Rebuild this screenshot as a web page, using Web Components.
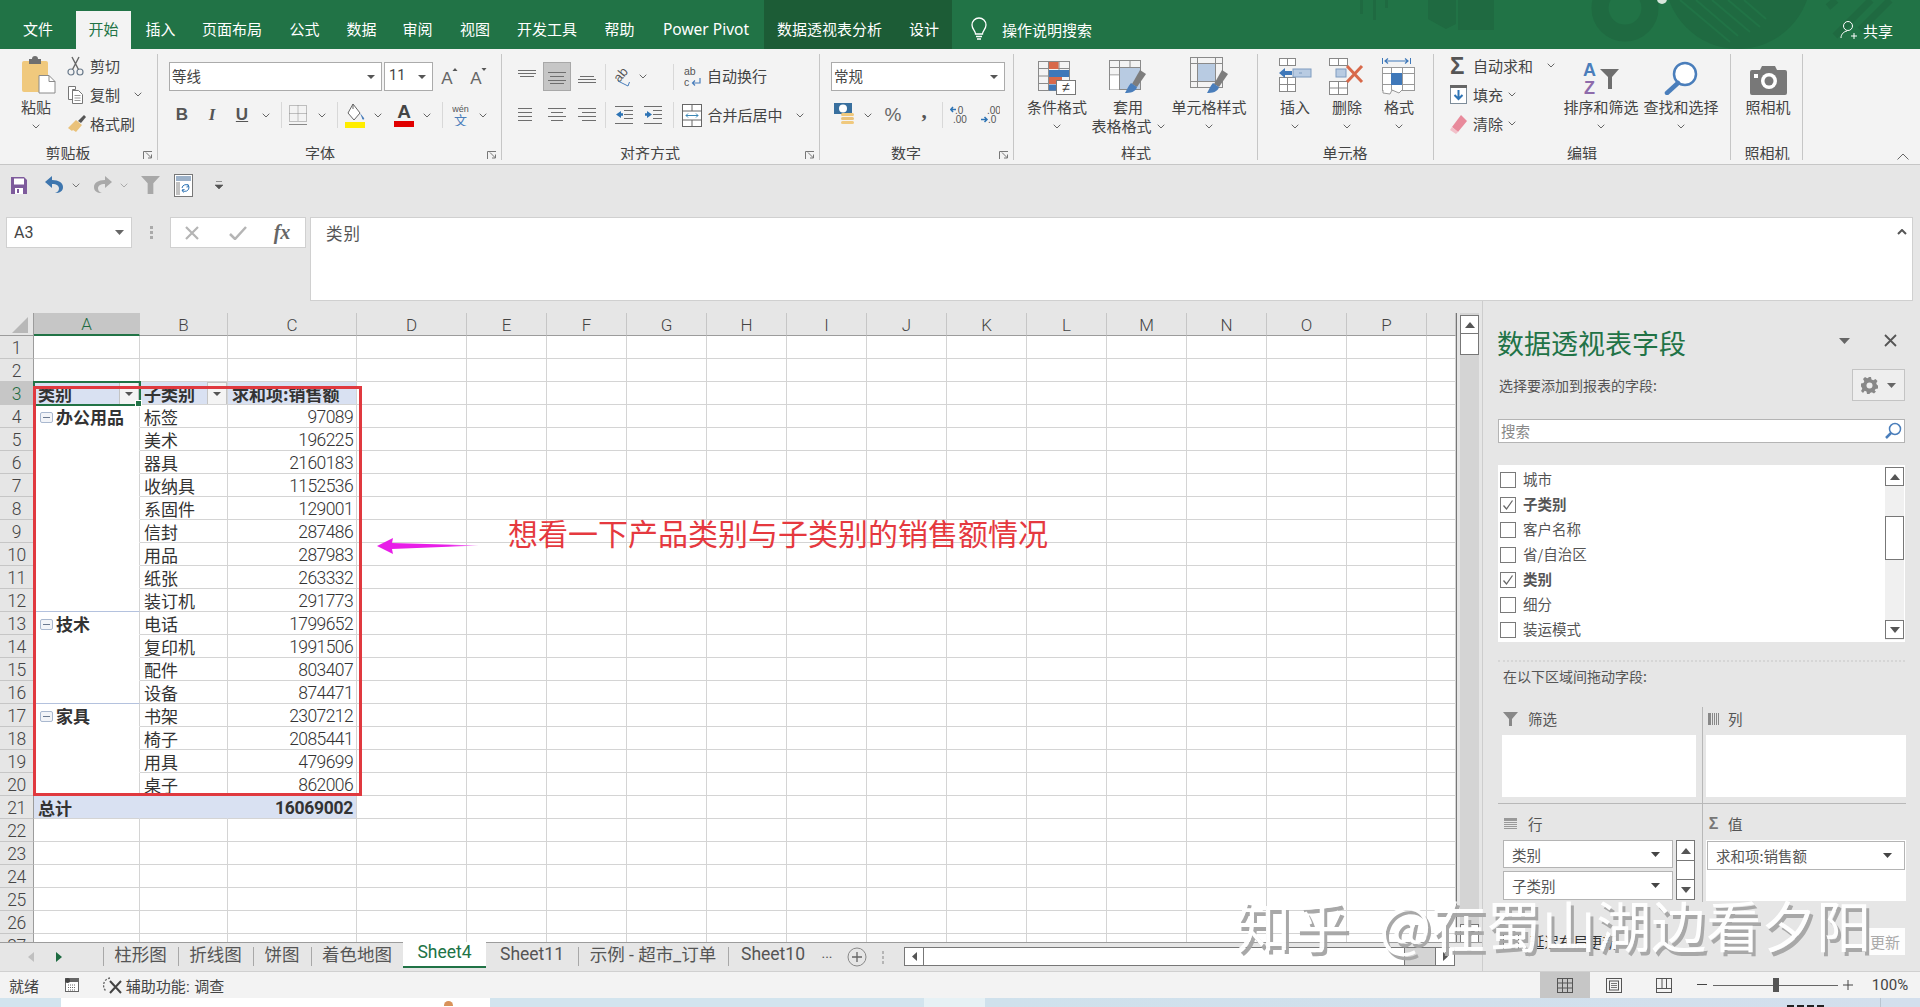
<!DOCTYPE html>
<html lang="zh"><head><meta charset="utf-8"><title>Excel</title>
<style>
html,body{margin:0;padding:0;width:1920px;height:1007px;overflow:hidden;background:#e6e6e6;font-family:"Noto Sans CJK SC",sans-serif}
</style></head>
<body>
<x-app>
  <x-tabbar></x-tabbar>
  <x-ribbon></x-ribbon>
  <x-qat></x-qat>
  <x-formula></x-formula>
  <x-main>
    <x-sheetarea></x-sheetarea>
    <x-pane></x-pane>
  </x-main>
  <x-status></x-status>
  <x-desktop></x-desktop>
  <x-annot></x-annot>
</x-app>
<script>
const CJK='"Noto Sans CJK SC"';
const FONT=`"Liberation Sans",${CJK},sans-serif`;
function def(name,css,html,init){
  customElements.define(name,class extends HTMLElement{
    connectedCallback(){
      if(this.shadowRoot)return;
      const r=this.attachShadow({mode:'open'});
      const h=typeof html==='function'?html(this):html;
      r.innerHTML=`<style>${css}</style>${h}`;
      if(init)init(r,this);
    }
  });
}
const chev=(c='#666')=>`<svg width="8" height="5" viewBox="0 0 8 5"><path d="M.7.7 4 4 7.3.7" fill="none" stroke="${c}"/></svg>`;
const tri=(c='#555',w=8,h=4)=>`<svg width="${w}" height="${h}" viewBox="0 0 8 4" preserveAspectRatio="none"><path d="M0 0h8L4 4z" fill="${c}"/></svg>`;
function place(x0,items){let cur=x0,s='';for(const [c,w,h,extra] of items){const ml=c-w/2-cur;s+=`<span class="c" style="width:${w}px;margin-left:${ml}px;${extra||''}">${h}</span>`;cur=c+w/2;}return s;}
const sep=`<i class="sp"></i>`;
const tx=t=>`<span class="tx">${t}</span>`;
function alignIcon(ys,xs){let s='<svg width="18" height="18" viewBox="0 0 18 18">';ys.forEach((y,i)=>{const [a,b]=xs[i];s+=`<rect x="${a}" y="${y}" width="${b-a}" height="1" fill="#6e6e6e"/>`});return s+'</svg>';}

/* ---------- app shell ---------- */
def('x-app',`:host{display:flex;flex-direction:column;width:1920px;height:1007px;position:relative;overflow:hidden}`,`<slot></slot>`);
def('x-main',`:host{display:flex;height:670px}`,`<slot></slot>`);

/* ---------- tab bar ---------- */
const tabs=[['文件',76,0],['开始',55,1],['插入',59,0],['页面布局',84,0],['公式',61,0],['数据',53,0],['审阅',59,0],['视图',56,0],['开发工具',88,0],['帮助',57,0],['Power Pivot',116,0]];
def('x-tabbar',`
:host{display:flex;height:49px;background:#217346;color:#fff;font:15px ${FONT};position:relative;overflow:hidden}
.t{display:flex;align-items:center;justify-content:center;height:38px;margin-top:11px;white-space:nowrap;padding-bottom:3px;box-sizing:border-box;position:relative;z-index:1;flex:none}
.on{background:#f3f3f3;color:#217346}
.pp{font-family:"Noto Sans",sans-serif;font-size:15.5px}
.ctx{display:flex;background:#1c5c36;width:188px;height:49px;position:relative;z-index:1;flex:none}
.ctx span{position:absolute;top:11px;height:35px;display:flex;align-items:center}
.tell{display:flex;align-items:center;margin:11px 0 0 18px;height:36px;position:relative;z-index:1}
.tell span{margin-left:14px}
.share{position:absolute;left:1840px;top:18px;display:flex;align-items:center;gap:5px;height:24px;z-index:1}
svg.deco{position:absolute;left:0;top:0}
`,()=>{
 let s=`<svg class="deco" width="1920" height="49" viewBox="0 0 1920 49">
  <g fill="#1f6a41">
   <rect x="1360" y="0" width="3" height="14"/><rect x="1373" y="0" width="3" height="20"/><rect x="1385" y="0" width="3" height="8"/>
   <path d="M1428 0h28v24l-10 5-18-10z"/><rect x="1458" y="0" width="36" height="30"/>
   <circle cx="1625" cy="8" r="25" fill="none" stroke="#1f6a41" stroke-width="17"/>
   <circle cx="1738" cy="-24" r="73"/>
  </g>
  <circle cx="1662" cy="-1" r="5" fill="#d8e6dc"/>
  <g stroke="#217346" stroke-width="2" fill="none"><path d="M1680 0l50 42M1696 0l42 36M1712 0l38 32M1728 0l32 27M1744 0l22 19"/></g>
  <g stroke="#1f6a41" stroke-width="7" fill="none"><path d="M1828 7l8-7M1835 36l36-36M1860 30l30-30"/></g>
 </svg>`;
 for(const [n,w,on] of tabs){s+=`<div class="t ${on?'on':''} ${n[0]=='P'?'pp':''}" style="width:${w}px">${n}</div>`;}
 s+=`<div class="ctx"><span style="left:13px">数据透视表分析</span><span style="left:145px">设计</span></div>`;
 s+=`<div class="tell"><svg width="18" height="24" viewBox="0 0 18 24"><path d="M5.5 17c0-3-3.500-5-3.500-9a7 7 0 0 1 14 0c0 4-3.500 6-3.500 9z" fill="none" stroke="#fff" stroke-width="1.300"/><path d="M6 19.500h6M7 22h4" stroke="#fff" stroke-width="1.300"/></svg><span>操作说明搜索</span></div>`;
 s+=`<div class="share"><svg width="18" height="20" viewBox="0 0 18 20"><circle cx="8" cy="6" r="4.500" fill="none" stroke="#fff"/><path d="M1 18c0-4 3-6.500 6-7M11 16h6M14 13v6" fill="none" stroke="#fff"/></svg><span>共享</span></div>`;
 return s;
});

/* ---------- ribbon ---------- */
def('x-group',`
:host{display:flex;flex-direction:column;height:106px;margin-top:5px;border-right:1px solid #c6c6c6;position:relative;box-sizing:border-box}
.body{flex:1;min-height:0}
.lbl{height:17px;line-height:22px;overflow:hidden;text-align:center;font-size:15px;color:#444;white-space:nowrap}
.lc{position:absolute;right:4px;bottom:1px;width:10px;height:8px}
`,h=>`<div class="body"><slot></slot></div><div class="lbl" style="width:${h.getAttribute('lw')}px">${h.getAttribute('label')}</div>${h.hasAttribute('launch')?`<svg class="lc" viewBox="0 0 10 8"><path d="M.5 8V.5H9M3 1.500 8.500 7M8.500 3.500V7H5" fill="none" stroke="#777"/></svg>`:''}`);

const paste=`<svg width="36" height="38" viewBox="0 0 36 38"><rect x="1" y="5" width="26" height="31" rx="2" fill="#f0c97d"/><path d="M8 3h3a3 3 0 0 1 6 0h3v5H8z" fill="#6f6f6f"/><path d="M18 19.500h10l6 6V37H18z" fill="#fff" stroke="#8a8a8a"/><path d="M28 19.500v6h6" fill="none" stroke="#8a8a8a"/></svg>`;
const sciss=`<svg width="17" height="20" viewBox="0 0 17 20"><g fill="none" stroke="#6b7b8c" stroke-width="1.200"><circle cx="4" cy="16" r="3"/><circle cx="13" cy="16" r="3"/></g><path d="M5.500 13.500 12 1M11.500 13.500 5 1" stroke="#666" stroke-width="1.400" fill="none"/></svg>`;
const copy=`<svg width="17" height="19" viewBox="0 0 17 19"><path d="M1.500 1.500h7v3h-3v10h-4z" fill="#fff" stroke="#777"/><path d="M5.500 5.500h6l4 4v9h-10z" fill="#fff" stroke="#777"/><path d="M7.500 10.500h6M7.500 13h6M7.500 15.500h6" stroke="#999"/></svg>`;
const brush=`<svg width="20" height="19" viewBox="0 0 20 19"><path d="M1 14 9 6l6 5-6 7-3-2-1 1z" fill="#eac27a"/><path d="M11 7l6-6 2 2-5 6z" fill="#555"/></svg>`;
const bordersI=`<svg width="18" height="20" viewBox="0 0 18 20"><rect x=".5" y=".5" width="17" height="16" fill="none" stroke="#888" stroke-dasharray="1 1"/><path d="M9 .5v16M.5 8.500h17" stroke="#888" stroke-dasharray="1 1"/><path d="M0 19.500h18" stroke="#888"/></svg>`;
const fillI=`<svg width="20" height="25" viewBox="0 0 20 25"><path d="M8 1l7 9-6 7-6-7z" fill="#fff" stroke="#666"/><path d="M15 10l2 5c0 2 3 2 2 0" fill="#4a7ebb"/><path d="M8 1v5" stroke="#666"/><rect y="19" width="20" height="6" fill="#ffed00"/></svg>`;
const fontCol=`<span style="display:inline-flex;flex-direction:column;align-items:center;font:bold 19px/15px 'Liberation Sans';color:#444">A<i style="display:block;width:20px;height:6px;background:#e00000;margin-top:2px"></i></span>`;
const wen=`<svg width="17" height="22" viewBox="0 0 17 22"><text x="8.500" y="8" text-anchor="middle" font-size="9" font-family="Liberation Sans" fill="#555">wén</text><text x="8.500" y="21" text-anchor="middle" font-size="13" font-family="Noto Sans CJK SC" fill="#4a7ebb">文</text></svg>`;
const grow=(d)=>`<svg width="18" height="18" viewBox="0 0 18 18"><text x="7" y="16" text-anchor="middle" font-size="17" font-family="Liberation Sans" fill="#666">A</text><path d="${d}" fill="#555"/></svg>`;
const orient=`<svg width="20" height="22" viewBox="0 0 20 22"><text transform="rotate(-50 9 11)" x="2" y="12" font-size="13" font-family="Liberation Sans" fill="#555">ab</text><path d="M4 15l10 5M14 20l1.500-4" stroke="#4a7ebb" fill="none"/></svg>`;
const wrapI=`<svg width="18" height="22" viewBox="0 0 18 22"><text x="0" y="9" font-size="10.500" font-family="Liberation Sans" fill="#555">ab</text><text x="0" y="20" font-size="10.500" font-family="Liberation Sans" fill="#555">c</text><path d="M16 12v5H9m2-2.500L8.500 17l2.500 2.500" fill="none" stroke="#4a7ebb" stroke-width="1.200"/></svg>`;
const indD=`<svg width="18" height="20" viewBox="0 0 18 20"><path d="M0 1.500h18M9 5.500h9M9 9.500h9M9 13.500h9M0 18.500h18" stroke="#6e6e6e"/><path d="M1 9.500 6 6v2.200h2v2.600H6V13z" fill="#2e74b5"/></svg>`;
const indI=`<svg width="18" height="20" viewBox="0 0 18 20"><path d="M0 1.500h18M9 5.500h9M9 9.500h9M9 13.500h9M0 18.500h18" stroke="#6e6e6e"/><path d="M8 9.500 3 6v2.200H1v2.600h2V13z" fill="#2e74b5"/></svg>`;
const merge=`<svg width="20" height="23" viewBox="0 0 20 23"><rect x=".5" y=".5" width="19" height="22" fill="#fff" stroke="#666"/><path d="M.5 7h19M.5 16h19M10 .5V7M10 16v6.500" stroke="#666"/><path d="M4 11.500h12M6 9.500l-2 2 2 2M14 9.500l2 2-2 2" stroke="#3b87b5" fill="none"/></svg>`;
const currency=`<svg width="20" height="24" viewBox="0 0 20 24"><rect width="18" height="11" fill="#386f9e"/><ellipse cx="9" cy="5.500" rx="4" ry="4" fill="#fff"/><rect x="7" y="10" width="13" height="3" rx="1.500" fill="#f0c97d"/><rect x="7" y="14" width="13" height="3" rx="1.500" fill="#eac27a"/><rect x="7" y="18" width="13" height="3" rx="1.500" fill="#f0c97d"/></svg>`;
const decI=(a,b,left)=>`<svg width="20" height="20" viewBox="0 0 20 20"><text x="${a}" y="8.500" font-size="10" font-family="Liberation Sans" fill="#555">${left?'.0':'.00'}</text><text x="${left?3:8}" y="18" font-size="10" font-family="Liberation Sans" fill="#555">${left?'.00':'.0'}</text>${left?'<path d="M1 4.500h5M3 2 .8 4.500 3 7" stroke="#2e74b5" stroke-width="1.500" fill="none"/>':'<path d="M1 14.500h6M4.500 12 7 14.500 4.500 17" stroke="#2e74b5" stroke-width="1.500" fill="none"/>'}</svg>`;
const cfI=`<svg width="38" height="34" viewBox="0 0 38 34"><g fill="none" stroke="#8a8a8a"><rect x=".5" y=".5" width="31" height="29"/><path d="M10.500.5v29M21 .5v29M.5 7.500h31M.5 15h31M.5 22.500h31"/></g><rect x="11" y="1" width="9.500" height="7" fill="#d8694a"/><rect x="11" y="9" width="20" height="7" fill="#3f78b9"/><rect x="11" y="16" width="13" height="7" fill="#d8694a"/><rect x="11" y="23.500" width="7" height="6" fill="#3f78b9"/><rect x="18.500" y="19.500" width="19" height="14" fill="#fff" stroke="#777"/><text x="28" y="31" text-anchor="middle" font-size="14" font-family="Liberation Sans" fill="#444">≠</text></svg>`;
const brushP=(x,y)=>`<g transform="translate(${x} ${y})"><path d="M14 0l6 4-9 13-5-3z" fill="#7d7d7d"/><path d="M5 13l6 4c-1 5-7 6-12 6 2-3 3-7 6-10z" fill="#4a7ebb"/></g>`;
const tfI=`<svg width="38" height="35" viewBox="0 0 38 35"><g fill="none" stroke="#8a8a8a"><rect x=".5" y=".5" width="31" height="29"/><path d="M10.500.5v29M21 .5v29M.5 7.500h31M.5 15h31M.5 22.500h31"/></g><rect x="11" y="8" width="20" height="21" fill="#b8cbe2"/><rect x="1" y="15.500" width="9" height="14" fill="#fff"/>${brushP(17,10)}</svg>`;
const csI=`<svg width="39" height="38" viewBox="0 0 39 38"><g fill="none" stroke="#8a8a8a"><rect x=".5" y=".5" width="32" height="30"/><path d="M.5 6.500h32M7.500.5v30M25.500.5v30M.5 24.500h32"/></g><rect x="8" y="7" width="17" height="17" fill="#b8cbe2"/>${brushP(18,13)}</svg>`;
const insI=`<svg width="34" height="37" viewBox="0 0 34 37"><g fill="#fff" stroke="#888"><rect x="1.500" y=".5" width="16" height="7"/><path d="M9.500.5v7"/><rect x="1.500" y="26.500" width="16" height="7"/><rect x="1.500" y="19.500" width="16" height="7"/><path d="M9.500 19.500v14"/></g><rect x="15" y="11" width="18" height="8" fill="#b8cbe2" stroke="#7f9cc0"/><path d="M24 15h-3" stroke="#7f9cc0"/><path d="M1 15l6-5v3h7v4H7v3z" fill="#3f78b9"/></svg>`;
const delI=`<svg width="36" height="37" viewBox="0 0 36 37"><g fill="#fff" stroke="#888"><rect x=".5" y=".5" width="18" height="7"/><path d="M9.500.5v7"/><rect x=".5" y="23.500" width="18" height="13"/><path d="M.5 30h18M9.500 23.500v13"/></g><rect x="7" y="11" width="10" height="8" fill="#b8cbe2" stroke="#7f9cc0"/><path d="M18 8l15 16M33 8 18 24" stroke="#d8694a" stroke-width="3"/></svg>`;
const fmtI=`<svg width="34" height="37" viewBox="0 0 34 37"><path d="M.5 0v6M28.500 0v6" stroke="#3f78b9"/><path d="M3 3h23M6 .5 3 3l3 2.500M23 .5 26 3l-3 2.500" stroke="#3f78b9" stroke-width="1.200" fill="none"/><g fill="#fff" stroke="#999"><rect x=".5" y="9.500" width="32" height="23"/><path d="M9.500 9.500v23M20.500 9.500v23M.5 15.500h32M.5 26.500h32"/></g><rect x="9" y="15" width="11" height="12" fill="#3f78b9"/><path d="M1 32v3l7 1 2-4M10 32l7 3 3-3" fill="#fff" stroke="#999"/></svg>`;
const sigma=`<span style="font:bold 24px/24px 'Liberation Sans';color:#555">Σ</span>`;
const fillD=`<svg width="18" height="19" viewBox="0 0 18 19"><rect x=".5" y=".5" width="16" height="18" fill="#fff" stroke="#7d8c99"/><rect y="0" width="17" height="3" fill="#666"/><path d="M8.500 5v9M4.500 10l4 4 4-4" stroke="#2e74b5" stroke-width="2" fill="none"/></svg>`;
const eraser=`<svg width="18" height="20" viewBox="0 0 18 20"><path d="M11 1l6 6-9 11-6-5z" fill="#e88a9b"/><path d="M2 13l6 5-2 2-6-4z" fill="#f2c0c9"/></svg>`;
const sortI=`<svg width="36" height="34" viewBox="0 0 36 34"><text x="0" y="15" font-size="18" font-weight="bold" font-family="Liberation Sans" fill="#4a7ebb">A</text><text x="1" y="33" font-size="18" font-weight="bold" font-family="Liberation Sans" fill="#8e6bab">Z</text><path d="M17 8h19l-7 8v12h-4V16z" fill="#6e6e6e"/></svg>`;
const findI=`<svg width="35" height="34" viewBox="0 0 35 34"><circle cx="21" cy="13" r="11" fill="#fff" stroke="#4a7ebb" stroke-width="2.500"/><path d="M14 22 3 32" stroke="#4a7ebb" stroke-width="4.500" stroke-linecap="round"/></svg>`;
const cam=`<svg width="37" height="30" viewBox="0 0 37 30"><path d="M2 5h8l2-4h13l2 4h8a2 2 0 0 1 2 2v21a2 2 0 0 1-2 2H2a2 2 0 0 1-2-2V7a2 2 0 0 1 2-2z" fill="#787878"/><circle cx="19" cy="16" r="8" fill="#fff"/><circle cx="19" cy="16" r="4.500" fill="#787878"/><rect x="4" y="9" width="4" height="4" fill="#fff"/></svg>`;
const large=(icon,label)=>`<span class="lg"><span class="ic">${icon}</span><span class="ll">${label}</span></span>`;
const big=(icon,label)=>large(icon,`<b>${label}</b><b>${chev()}</b>`);
def('x-ribbon',`
:host{display:flex;height:116px;background:#f3f3f3;border-bottom:1px solid #c6c6c6;box-sizing:border-box;font:15px ${FONT};color:#444;position:relative}
.r{display:flex;align-items:center;white-space:nowrap}
.c{display:inline-flex;align-items:center;justify-content:center;flex:none;height:100%;white-space:nowrap}
.tx{margin-bottom:2px}
.pad{padding-top:8px}
.sp{display:block;width:1px;height:26px;background:#d8d8d8}
.sel{box-sizing:border-box;height:29px;background:#fff;border:1px solid #ababab;display:flex;align-items:center;justify-content:space-between;padding:0 6px 0 2px;font-size:14.500px}
.sel span{margin-bottom:2px}
.lg{display:flex;flex-direction:column;align-items:center;width:100%;height:100%}
.ic{height:42px;display:flex;align-items:flex-end;justify-content:center}
.ll{display:flex;flex-direction:column;align-items:center;line-height:19px;margin-top:3px}
.ll b{font-weight:400;display:flex;align-items:center;height:19px}
.up{position:absolute;left:1897px;top:104px}
.tb{font:bold 17px 'Liberation Sans';color:#555}
`,()=>{
 const a1=alignIcon([2,5,8],[[0,18],[0,18],[2,16]]);
 const a2=alignIcon([4,8,12,15],[[0,18],[2,16],[0,18],[2,16]]);
 const a3=alignIcon([8,11,14],[[2,16],[0,18],[0,18]]);
 const l1=alignIcon([2,6,10,14],[[0,14],[0,14],[0,14],[0,14]]);
 const l2=alignIcon([2,6,10,14],[[0,18],[3,15],[0,18],[3,15]]);
 const l3=alignIcon([2,6,10,14],[[0,18],[4,18],[0,18],[4,18]]);
 let s='';
 s+=`<x-group label="剪贴板" lw="136" launch style="width:158px"><div class="r" style="align-items:flex-start;margin-top:-3px;height:87px">
   ${place(0,[[36,44,`<span class="lg" style="padding-top:5px;height:auto"><span class="ic" style="height:38px;margin-left:6px">${paste}</span><span class="ll" style="margin-top:4px"><b>粘贴</b><b>${chev()}</b></span></span>`,'align-items:flex-start']])}
   <div style="margin-left:9px;width:90px">
     <div class="r" style="height:29px"><span style="width:23px;display:flex">${sciss}</span>剪切</div>
     <div class="r" style="height:29px"><span style="width:23px;display:flex">${copy}</span>复制<span style="margin-left:14px;display:flex">${chev()}</span></div>
     <div class="r" style="height:29px"><span style="width:23px;display:flex">${brush}</span>格式刷</div>
   </div></div></x-group>`;
 s+=`<x-group label="字体" lw="324" launch style="width:344px"><div class="pad">
   <div class="r" style="height:29px;padding-left:11px"><div class="sel" style="width:213px"><span>等线</span>${tri()}</div><div class="sel" style="width:49px;margin-left:2px;padding-left:4px;font-family:Roboto"><span>11</span>${tri()}</div>
   <span class="c" style="width:32px;margin-left:0">${grow('M12.500 3 15 0l2.500 3z')}</span><span class="c" style="width:26px">${grow('M12.500 0 15 3l2.500-3z')}</span></div>
   <div class="r" style="height:30px;margin-top:9px">${place(158,[
    [182,24,'<span class="tb">B</span>'],[212,24,'<span class="tb" style="font-family:Liberation Serif;font-style:italic">I</span>'],[242,24,'<span class="tb" style="text-decoration:underline">U</span>'],[266,10,chev()],[281,2,sep],[298,18,bordersI],[322,10,chev()],[337,2,sep],[355,20,fillI],[378,10,chev()],[404,22,fontCol],[427,10,chev()],[442,2,sep],[460,18,wen],[483,10,chev()]])}</div>
 </div></x-group>`;
 s+=`<x-group label="对齐方式" lw="296" launch style="width:318px"><div class="pad">
  <div class="r" style="height:29px">${place(502,[[527,18,a1],[557,28,a2,'background:#c6c6c6;box-shadow:inset 0 0 0 1px #a8a8a8'],[587,18,a3],[605,2,sep],[624,20,orient],[643,10,chev()],[673,2,sep],[693,18,wrapI],[737,60,tx('自动换行')]])}</div>
  <div class="r" style="height:30px;margin-top:9px">${place(502,[[527,18,l1],[557,18,l2],[587,18,l3],[605,2,sep],[624,18,indD],[653,18,indI],[673,2,sep],[692,20,merge],[745,75,tx('合并后居中')],[800,10,chev()]])}</div>
 </div></x-group>`;
 s+=`<x-group label="数字" lw="172" launch style="width:194px"><div class="pad">
  <div class="r" style="height:29px;padding-left:11px"><div class="sel" style="width:174px"><span>常规</span>${tri()}</div></div>
  <div class="r" style="height:30px;margin-top:9px">${place(820,[[844,20,currency],[868,10,chev()],[893,22,'<span style="font:19px \'Liberation Sans\';color:#666">%</span>'],[924,12,'<span style="font:bold 21px \'Liberation Serif\';color:#555;margin-top:-8px">,</span>'],[942,2,sep],[960,20,decI(5,0,true)],[990,20,decI(7,0,false)]])}</div>
 </div></x-group>`;
 s+=`<x-group label="样式" lw="244" style="width:244px"><div class="r" style="height:87px;margin-top:-1px;align-items:flex-start">${place(1014,[
  [1057,64,big(cfI,'条件格式')],
  [1128,74,large(tfI,`<b>套用</b><b>表格格式<span style="margin-left:5px;display:flex">${chev()}</span></b>`)],
  [1209,80,big(csI,'单元格样式')]])}</div></x-group>`;
 s+=`<x-group label="单元格" lw="174" style="width:176px"><div class="r" style="height:87px;margin-top:-1px;align-items:flex-start">${place(1258,[
  [1295,46,big(insI,'插入')],[1347,46,big(delI,'删除')],[1399,46,big(fmtI,'格式')]])}</div></x-group>`;
 s+=`<x-group label="编辑" lw="296" style="width:297px"><div class="r" style="height:87px;margin-top:-3px;align-items:flex-start">
   <div style="margin-left:16px;width:113px">
     <div class="r" style="height:29px"><span style="width:23px;display:flex">${sigma}</span>自动求和<span style="margin-left:14px;display:flex">${chev()}</span></div>
     <div class="r" style="height:29px"><span style="width:23px;display:flex">${fillD}</span>填充<span style="margin-left:5px;display:flex">${chev()}</span></div>
     <div class="r" style="height:29px"><span style="width:23px;display:flex">${eraser}</span>清除<span style="margin-left:5px;display:flex">${chev()}</span></div>
   </div>
   <div class="r" style="height:88px;align-items:flex-start;margin-top:2px">${place(1563,[[1601,76,big(sortI,'排序和筛选')],[1681,76,big(findI,'查找和选择')]])}</div>
 </div></x-group>`;
 s+=`<x-group label="照相机" lw="72" style="width:72px"><div class="r" style="height:87px;margin-top:-1px;align-items:flex-start">${place(1731,[[1768,50,large(cam,'<b>照相机</b>')]])}</div></x-group>`;
 s+=`<svg class="up" width="12" height="7" viewBox="0 0 12 7"><path d="M.5 6.500 6 1l5.500 5.500" fill="none" stroke="#666"/></svg>`;
 return s;
});

/* ---------- QAT ---------- */
def('x-qat',`:host{display:block;height:52px;background:#e6e6e6}.r{display:flex;align-items:center;height:40px}.c{display:inline-flex;justify-content:center;align-items:center;flex:none}`,()=>`<div class="r">${place(0,[
 [19,16,`<svg width="16" height="17" viewBox="0 0 16 17"><path d="M0 0h13l3 3v14H0z" fill="#7e5b9c"/><rect x="3" y="1.500" width="10" height="6" fill="#fff"/><rect x="4" y="11" width="8" height="6" fill="#fff"/><rect x="6" y="12" width="2" height="4" fill="#7e5b9c"/></svg>`],
 [54,19,`<svg width="19" height="19" viewBox="0 0 19 19"><path d="M7 0 0 6l7 6V8c5 0 7 2 7 4.500 0 2.500-2 4-4 4.500 5 0 8-2 8-6S14 4 7 4z" fill="#3e76ae"/></svg>`],
 [76,8,chev('#777')],
 [102,19,`<svg width="19" height="19" viewBox="0 0 19 19"><path d="M12 0l7 6-7 6V8C7 8 5 10 5 12.500 5 15 7 16.500 9 17c-5 0-8-2-8-6s4-7 11-7z" fill="#a9a9a9"/></svg>`],
 [124,8,chev('#aaa')],
 [150,19,`<svg width="19" height="18" viewBox="0 0 20 22" preserveAspectRatio="none"><path d="M0 0h20l-7 9v13H7V9z" fill="#a8a8a8"/></svg>`],
 [184,20,`<svg width="20" height="23" viewBox="0 0 20 23"><rect x=".5" y=".5" width="18" height="22" fill="#fff" stroke="#777"/><rect x="2" y="2" width="15" height="5" fill="#9db2c9"/><rect x="2" y="8" width="4" height="13" fill="#c2c2c2"/><path d="M8 14a4 4 0 0 1 7-2M15 13a4 4 0 0 1-7 3M13.500 10l1.500 2.500-2.500.5M9.500 18.500 8 16l2.500-.5" fill="none" stroke="#2e74b5"/></svg>`],
 [219,8,`<svg width="8" height="10" viewBox="0 0 8 10"><path d="M1 1.500h6M0 5h8l-4 4z" fill="#555" stroke="#555" stroke-width=".6"/></svg>`]
])}</div>`);

/* ---------- formula bar ---------- */
def('x-formula',`
:host{display:flex;height:84px;background:#e6e6e6;font:15px ${FONT};color:#444;align-items:flex-start}
.box{height:31px;background:#fff;border:1px solid #d0d0d0;box-sizing:border-box;display:flex;align-items:center}
.nm{width:126px;margin-left:6px;padding:0 7px;justify-content:space-between;font:16px Roboto}
.d{width:38px;display:flex;flex-direction:column;gap:2px;align-items:center;height:31px;justify-content:center}
.d i{width:3px;height:3px;background:#aaa;display:block}
.bt{width:136px}
.c{display:inline-flex;justify-content:center;align-items:center;flex:none}
.inp{margin-left:4px;width:1603px;height:84px;align-items:flex-start;padding:3px 15px;position:relative;font-size:16.500px;letter-spacing:1px;color:#555}
.inp svg{position:absolute;right:5px;top:11px}
.fx{font:italic bold 20px "Liberation Serif";color:#666}
`,()=>`<div class="box nm"><span>A3</span>${tri('#666',9,5)}</div><div class="d"><i></i><i></i><i></i></div>
<div class="box bt">${place(171,[[192,14,`<svg width="14" height="14" viewBox="0 0 14 14"><path d="M1 1l12 12M13 1 1 13" stroke="#b5b5b5" stroke-width="2.200"/></svg>`],[238,18,`<svg width="18" height="14" viewBox="0 0 18 14"><path d="M1 8l5 5L17 1" stroke="#b5b5b5" stroke-width="2.500" fill="none"/></svg>`],[282,20,`<span class="fx">fx</span>`]])}</div>
<div class="box inp"><span>类别</span><svg width="10" height="6" viewBox="0 0 10 6"><path d="M1 5l4-4 4 4" stroke="#555" stroke-width="2" fill="none"/></svg></div>`);

/* ---------- sheet ---------- */
const COLS=[34,106,88,129,110,80,80,80,80,80,80,80,80,80,80,80,80,29];
const L='ABCDEFGHIJKLMNOP';
const D={3:['类别','子类别','求和项:销售额'],4:['办公用品','标签','97089'],5:['','美术','196225'],6:['','器具','2160183'],7:['','收纳具','1152536'],8:['','系固件','129001'],9:['','信封','287486'],10:['','用品','287983'],11:['','纸张','263332'],12:['','装订机','291773'],13:['技术','电话','1799652'],14:['','复印机','1991506'],15:['','配件','803407'],16:['','设备','874471'],17:['家具','书架','2307212'],18:['','椅子','2085441'],19:['','用具','479699'],20:['','桌子','862006'],21:['总计','','16069002']};
def('x-sheet',`
:host{display:block;width:1457px;height:629px;position:relative;overflow:hidden;background:#fff;border-right:1px solid #777;box-sizing:border-box;font:17px ${CJK},sans-serif;color:#333}
.g{display:grid;grid-template-columns:${COLS.map(c=>c+'px').join(' ')};grid-template-rows:23px repeat(27,23px)}
.h{background:#e6e6e6;display:flex;align-items:center;justify-content:center;font:300 17px Roboto;color:#444;border-right:1px solid #c6c6c6;border-bottom:1px solid #9c9c9c;box-sizing:border-box;padding-top:1px}
.rh{background:#e6e6e6;display:flex;align-items:center;justify-content:center;font:300 17.500px Roboto;letter-spacing:-.4px;color:#444;border-right:1px solid #9c9c9c;border-bottom:1px solid #c6c6c6;box-sizing:border-box;padding-top:1px}
.sel{background:#c6c6c6;color:#1f6b42}
.c{border-right:1px solid #d4d4d4;border-bottom:1px solid #d4d4d4;box-sizing:border-box;line-height:24px;overflow:hidden;white-space:nowrap;padding:0 3px 0 4px;position:relative}
.n{text-align:right;font:300 17.500px/24px Roboto;letter-spacing:-.6px;color:#333}
.bl{background:#d9e1f2}
.b{font-weight:700}
.nl{border-bottom-color:transparent}
.gl{border-bottom-color:#b4c2de}
.nr{border-right-color:transparent}
.m{display:inline-block;width:11px;height:9px;border:1px solid #a9b8cf;border-radius:2px;background:#f2f4f8;position:relative;margin:0 3px 0 2px;vertical-align:1px}
.m:after{content:"";position:absolute;left:2px;right:2px;top:4px;height:1px;background:#6b7a90}
.dd{position:absolute;width:20px;height:23px;top:0;right:0;background:#f4f4f4;border:1px solid #c4c4c4;box-sizing:border-box;display:flex;justify-content:center;padding-top:9px}
.cursor{position:absolute;left:33px;top:68px;width:108px;height:25px;border:2px solid #217346;box-sizing:border-box;pointer-events:none}
.cursor:after{content:"";position:absolute;right:-3px;bottom:-3px;width:5px;height:5px;background:#217346;border:1px solid #fff}
.red{position:absolute;left:33px;top:73px;width:329px;height:410px;border:3px solid #e0393f;box-sizing:border-box;pointer-events:none}
`,()=>{
 let s=`<div class="g"><div class="h" style="border-right-color:#9c9c9c"><svg width="16" height="16" viewBox="0 0 16 16" style="margin:0 0 0 6px"><path d="M16 0v16H0z" fill="#b8b8b8"/></svg></div>`;
 for(let i=0;i<L.length;i++)s+=`<div class="h ${i==0?'sel':''}" ${i==0?'style="border-bottom:2px solid #217346"':''}>${L[i]}</div>`;
 s+=`<div class="h"></div>`;
 for(let r=1;r<=27;r++){
  s+=`<div class="rh ${r==3?'sel':''}">${r}</div>`;
  const d=D[r]||[];
  for(let c=0;c<17;c++){
    let cls='c',t=d[c]||'';
    if(r==3&&c<3)cls+=' bl b';
    if(r==21&&c<3)cls+=' bl b'+(c<2?' nr':'');
    if(c==0&&r>=4&&r<=20)cls+=(r==12||r==16)?' gl':' nl';
    if(c==0&&[4,13,17].includes(r))t=`<i class="m"></i>`+`<span class="b">${t}</span>`;
    if(c==2&&r>3)cls+=' n'+(r==21?' b':'');
    if(r==21&&c==2)t=`<span style="font:700 17.500px/24px Roboto;letter-spacing:-.3px">${t}</span>`;
    if(r==3&&c<2)t+=`<span class="dd">${tri('#555',8,4)}</span>`;
    s+=`<div class="${cls}">${t}</div>`;
  }
 }
 s+=`</div><div class="cursor"></div><div class="red"></div>`;
 return s;
});
const sbArrow=(d)=>`<svg width="10" height="6" viewBox="0 0 10 6"><path d="${d}" fill="#555"/></svg>`;
def('x-sheetarea',`
:host{display:block;width:1483px;border-right:1px solid #cdcdcd;box-sizing:border-box;padding-top:12px;background:#e6e6e6}
.top{display:flex;height:629px}
.vs{width:19px;margin-left:3px;background:#d4d4d4;position:relative;display:flex;flex-direction:column;justify-content:space-between;height:630px;padding-top:2px;box-sizing:border-box}
.b{height:19px;background:#fff;border:1px solid #777;box-sizing:border-box;display:flex;align-items:center;justify-content:center}
.th{height:21px;background:#fff;border:1px solid #777;border-top:0;box-sizing:border-box}
`,`<div class="top"><x-sheet></x-sheet><div class="vs"><div><div class="b">${sbArrow('M0 6l5-6 5 6z')}</div><div class="th"></div></div><div class="b">${sbArrow('M0 0l5 6 5-6z')}</div></div></div><x-sheettabs></x-sheettabs>`);

/* ---------- sheet tabs ---------- */
const ST=[['柱形图',75],['折线图',75],['饼图',58],['着色地图',92],['Sheet4',83,1],['Sheet11',92],['示例 - 超市_订单',150],['Sheet10',90]];
def('x-sheettabs',`
:host{display:flex;height:29px;background:#e6e6e6;border-top:1px solid #9c9c9c;box-sizing:border-box;font:17.500px Roboto,${CJK},sans-serif;color:#555;align-items:flex-start;position:relative}
.nav{width:103px;display:flex;height:28px;align-items:center;flex:none}
.t{height:28px;box-sizing:border-box;display:flex;align-items:center;justify-content:center;white-space:nowrap;position:relative;flex:none;padding-bottom:7px}
.t.s:before{content:"";position:absolute;left:0;top:4px;height:19px;width:1px;background:#a8a8a8}
.on{background:#fff;color:#217346;border-bottom:2px solid #217346;height:26px;margin-top:-1px;padding-bottom:4px}
.more{width:18px;text-align:center;padding-bottom:8px;line-height:20px;font-size:14px}
.plus{margin-left:11px;display:flex}
.dots{margin-left:15px;display:flex;flex-direction:column;gap:2px}
.dots i{display:block;width:2px;height:3px;background:#b5b5b5}
.hs{margin-left:20px;display:flex;height:19px;margin-top:4px;width:551px;background:#d4d4d4;border:1px solid #777;box-sizing:border-box}
.hs .b{width:18px;background:#fff;display:flex;align-items:center;justify-content:center;flex:none;border-right:1px solid #777}
.hs .th{width:480px;background:#fff;border-right:1px solid #777;flex:none}
.hs .sp{flex:1}
.hs .e{width:18px;background:#fff;border-left:1px solid #777;display:flex;align-items:center;justify-content:center;flex:none}
`,()=>{
 let s=`<div class="nav"><svg width="6" height="10" viewBox="0 0 6 10" style="margin-left:28px"><path d="M6 0 0 5l6 5z" fill="#c0c0c0"/></svg><svg width="6" height="10" viewBox="0 0 6 10" style="margin-left:22px"><path d="M0 0l6 5-6 5z" fill="#1d6b40"/></svg></div>`;
 ST.forEach(([n,w,on],i)=>{s+=`<div class="t ${on?'on':(i==5?'':'s')}" style="width:${w}px">${n}</div>`;});
 s+=`<div class="t more">...</div><span class="plus"><svg width="20" height="20" viewBox="0 0 20 20" style="margin-top:4px"><circle cx="10" cy="10" r="9" fill="none" stroke="#888"/><path d="M5 10h10M10 5v10" stroke="#666" stroke-width="1.300"/></svg></span><span class="dots" style="margin-top:8px"><i></i><i></i><i></i></span>
 <div class="hs"><div class="b"><svg width="5" height="9" viewBox="0 0 5 9"><path d="M5 0 0 4.500 5 9z" fill="#555"/></svg></div><div class="th"></div><div class="sp"></div><div class="e"><svg width="5" height="9" viewBox="0 0 5 9"><path d="M0 0l5 4.500L0 9z" fill="#555"/></svg></div></div>`;
 return s;
});

/* ---------- pane ---------- */
const F=[['城市',0],['子类别',1],['客户名称',0],['省/自治区',0],['类别',1],['细分',0],['装运模式',0]];
def('x-pane',`
:host{display:block;width:437px;background:#e6e6e6;box-sizing:border-box;padding:24px 15px 0 15px;font:14.500px ${CJK},sans-serif;color:#555;position:relative}
.title{display:flex;align-items:center;height:35px;font-size:27px;color:#217346;white-space:nowrap;margin-left:-1px;position:relative}
.title .a{position:absolute;left:342px;top:13px;display:flex}
.title .x{position:absolute;left:387px;top:9px;display:flex}
.sel{display:flex;align-items:center;justify-content:space-between;height:32px;margin-top:9px;font-size:14px;padding-left:1px}
.gear{width:53px;height:32px;background:#eee;border:1px solid #c4c4c4;box-sizing:border-box;display:flex;align-items:center;justify-content:center;gap:9px}
.search{height:24px;margin-top:18px;background:#fff;border:1px solid #b4b4b4;box-sizing:border-box;display:flex;align-items:center;justify-content:space-between;padding:0 2px;color:#888}
.search span{margin-bottom:2px}
.list{height:177px;margin-top:22px;background:#fff;display:flex;overflow:hidden}
.items{flex:1;padding:2px 0 0 2px}
.it{display:flex;align-items:center;height:25px;gap:7px;white-space:nowrap}
.it span:last-child{margin-bottom:2px}
.ck{width:16px;height:16px;border:1px solid #7a7a7a;box-sizing:border-box;background:#fff;flex:none;display:flex;align-items:center;justify-content:center}
.bd{font-weight:700}
.ls{width:19px;margin:2px 1px 2px 0;background:#f0f0f0;display:flex;flex-direction:column;align-items:stretch;height:173px;position:relative}
.sb{height:19px;background:#fff;border:1px solid #777;box-sizing:border-box;display:flex;align-items:center;justify-content:center;flex:none}
.tm{height:44px;margin-top:30px;margin-bottom:60px;background:#fff;border:1px solid #777;box-sizing:border-box;flex:none}
.dot{height:0;border-top:2px dotted #d6d6d6;margin-top:18px}
.drag{height:22px;line-height:22px;margin-top:3px;font-size:14px;padding-left:5px}
.areas{display:grid;grid-template-columns:205px 203px;grid-template-rows:97px 98px;margin-top:20px;height:195px}
.ar{display:flex;flex-direction:column;position:relative}
.ar.l{border-right:1px solid #b8b8b8;width:205px;box-sizing:border-box}
.top{border-bottom:1px solid #b8b8b8}
.hd{display:flex;align-items:center;height:28px;flex:none;padding:0 0 5px 4px;gap:9px;font-size:14.500px;box-sizing:border-box}
.hd .ico{width:17px;display:flex;justify-content:center}
.bx{background:#fff;height:62px;flex:none}
.ar.l .bx{width:194px;margin-left:4px}
.ar.r .bx{width:200px;margin-left:3px}
.rowhd{height:36px;padding:3px 0 0 4px}
.rbox{display:flex;gap:3px;margin-left:5px;height:61px}
.pills{display:flex;flex-direction:column;gap:3px;width:170px}
.pill{height:28px;background:#fff;border:1px solid #b4b4b4;box-sizing:border-box;display:flex;align-items:center;justify-content:space-between;padding:0 12px 0 8px}
.vsb{width:19px;display:flex;flex-direction:column;background:#fff;border:1px solid #777;box-sizing:border-box;height:60px;justify-content:space-between}
.vsb .m{height:19px;display:flex;align-items:center;justify-content:center}
.vsb .m:first-child{border-bottom:1px solid #777}
.vsb .m:last-child{border-top:1px solid #777}
.foot{display:flex;align-items:center;justify-content:space-between;height:27px;margin-top:26px;position:relative;padding-left:5px}
.foot .dl{display:flex;align-items:center;gap:11px;color:#333;font-size:14.500px}
.upd{width:40px;height:27px;background:#fdfdfd;color:#aaa;display:flex;align-items:center;justify-content:center;font-size:15px}
`,()=>{
 const tick=`<svg width="12" height="12" viewBox="0 0 12 12"><path d="M1.500 6.500 4.500 10 10.500 1.500" fill="none" stroke="#666" stroke-width="1.300"/></svg>`;
 const its=F.map(([n,c])=>`<div class="it"><span class="ck">${c?tick:''}</span><span class="${c?'bd':''}">${n}</span></div>`).join('');
 return `
 <div class="title">数据透视表字段<span class="a">${tri('#666',11,6)}</span><span class="x"><svg width="13" height="13" viewBox="0 0 13 13"><path d="M1 1l11 11M12 1 1 12" stroke="#555" stroke-width="1.800"/></svg></span></div>
 <div class="sel"><span>选择要添加到报表的字段:</span><span class="gear"><svg width="17" height="17" viewBox="0 0 17 17"><path d="M7 0h3l.5 2.500 1.800.8L14.500 2l2 2-1.300 2.200.8 1.800 1 .5v3l-2.500.5-.8 1.800L15 14.500l-2 2-2.200-1.300-1.800.8-.5 1H6l-.5-2.500-1.800-.8L2 16l-2-2 1.300-2.200-.8-1.800L0 9.500v-3l2.500-.5.8-1.800L2 2l2-2 2.200 1.300L8 .5z" fill="#888"/><circle cx="8.500" cy="8.500" r="3" fill="#eee"/></svg>${tri('#666',9,5)}</span></div>
 <div class="search"><span>搜索</span><svg width="18" height="18" viewBox="0 0 18 18"><circle cx="11" cy="7" r="5.500" fill="#fff" stroke="#4a7ebb" stroke-width="1.500"/><path d="M7 11l-5 5" stroke="#4a7ebb" stroke-width="2.500"/></svg></div>
 <div class="list"><div class="items">${its}</div><div class="ls"><div class="sb">${sbArrow('M0 6l5-6 5 6z')}</div><div class="tm"></div><div class="sb">${sbArrow('M0 0l5 6 5-6z')}</div></div></div>
 <div class="dot"></div>
 <div class="drag">在以下区域间拖动字段:</div>
 <div class="areas">
  <div class="ar l top"><div class="hd"><span class="ico"><svg width="15" height="14" viewBox="0 0 15 14"><path d="M0 0h15L9 7v7H6V7z" fill="#888"/></svg></span>筛选</div><div class="bx"></div></div>
  <div class="ar r top"><div class="hd" style="gap:6px;padding-left:2px"><span class="ico"><svg width="11" height="12" viewBox="0 0 11 12"><path d="M0 0h3v12H0zM4 0h1v12H4zM6 0h1v12H6zM8 0h1v12H8zM10 0h1v12h-1z" fill="#888"/></svg></span>列</div><div class="bx"></div></div>
  <div class="ar l"><div class="hd rowhd"><span class="ico"><svg width="13" height="11" viewBox="0 0 13 11"><path d="M0 0h13v3H0zM0 4h13v1H0zM0 6h13v1H0zM0 8h13v1H0zM0 10h13v1H0z" fill="#999"/></svg></span>行</div>
   <div class="rbox"><div class="pills"><div class="pill">类别${tri('#444',9,5)}</div><div class="pill" style="height:29px">子类别${tri('#444',9,5)}</div></div><div class="vsb"><div class="m">${sbArrow('M0 6l5-6 5 6z')}</div><div class="m">${sbArrow('M0 0l5 6 5-6z')}</div></div></div></div>
  <div class="ar r"><div class="hd rowhd" style="gap:6px;padding-left:2px"><span class="ico" style="font:bold 16px 'Liberation Sans';color:#777">Σ</span>值</div>
   <div style="background:#fff;height:61px;margin-left:3px;width:200px;padding:1px;box-sizing:border-box"><div class="pill" style="height:29px">求和项:销售额${tri('#444',9,5)}</div></div></div>
 </div>
 <div class="foot"><div class="dl"><span class="ck" style="background:#eee"></span>延迟布局更新</div><div class="upd">更新</div></div>`;
});

/* ---------- status ---------- */
def('x-status',`
:host{display:flex;align-items:center;height:27px;background:#f3f3f3;font:15px ${FONT};color:#444;position:relative;box-sizing:border-box;border-top:1px solid #d0d0d0}
.r{display:flex;align-items:center;height:100%;flex:none}
.c{display:inline-flex;justify-content:center;align-items:center;flex:none;height:100%;white-space:nowrap}
`,()=>`<div class="r">${place(0,[
 [24,32,'就绪'],
 [72,14,`<svg width="14" height="14" viewBox="0 0 14 14"><rect x=".5" y="1.500" width="13" height="12" fill="#fff" stroke="#666"/><rect y="0" width="14" height="4" fill="#666"/><rect width="5" height="5" rx="2.500" fill="#444"/><path d="M3 7h8M3 9.500h8M3 12h8" stroke="#666" stroke-dasharray="1 1"/></svg>`],
 [113,20,`<svg width="20" height="19" viewBox="0 0 20 19"><path d="M7 2A7.500 7.500 0 0 0 3 15" fill="none" stroke="#666" stroke-dasharray="2 1.500" stroke-width="1.400"/><path d="M7 5l11 12M18 5 7 17" stroke="#444" stroke-width="2"/></svg>`],
 [175,98,'辅助功能: 调查']
])}${place(224,[
 [1565,50,`<svg width="16" height="15" viewBox="0 0 16 15"><rect x=".5" y=".5" width="15" height="14" fill="none" stroke="#555"/><path d="M5.500.5v14M10.500.5v14M.5 5h15M.5 10h15" stroke="#555"/></svg>`,'background:#c6c6c6'],
 [1614,16,`<svg width="16" height="15" viewBox="0 0 16 15"><rect x=".5" y=".5" width="15" height="14" fill="none" stroke="#555"/><rect x="3.500" y="3" width="9" height="9" fill="none" stroke="#555"/><path d="M5 5.500h6M5 7.500h6M5 9.500h6" stroke="#777"/></svg>`],
 [1664,16,`<svg width="16" height="15" viewBox="0 0 16 15"><rect x=".5" y=".5" width="15" height="14" fill="none" stroke="#555"/><path d="M.5 10.500h15M6 .5v10M10.500.5v10" stroke="#555"/></svg>`],
 [1702,10,'<svg width="10" height="2"><rect width="10" height="1" y="0" fill="#444"/></svg>'],
 [1775.500,125,'<span style="display:block;width:125px;height:1px;background:#666;position:relative"><i style="position:absolute;left:60px;top:-7px;width:6px;height:14px;background:#555;display:block"></i></span>'],
 [1848,10,'<svg width="10" height="10"><path d="M0 5h10M5 0v10" stroke="#444"/></svg>'],
 [1890,42,'<span style="font:15px Roboto">100%</span>']
])}</div>`);

/* ---------- desktop strip ---------- */
def('x-desktop',`
:host{display:flex;height:9px;background:#d2e4ee;overflow:hidden;flex:none;position:relative}
.w{width:429px;margin-left:61px;background:#fff;flex:none;display:flex;justify-content:flex-end}
.o{width:9px;height:5px;margin:3px 37px 0 0;background:#d8925a;border-radius:5px 5px 0 0}
.a{width:434px;flex:none}
.l{width:61px;background:#e6f1f5;flex:none}
.r{flex:1;background:linear-gradient(90deg,#cfe1ec,#d3dfed);display:flex;justify-content:flex-end;position:relative}
.t{position:absolute;left:802px;top:7px;width:40px;height:2px;background:repeating-linear-gradient(90deg,#222 0 7px,transparent 7px 10px)}
.e{position:absolute;left:895px;top:0;width:1px;height:9px;background:#b8c4d0}
`,`<div class="w"><span class="o"></span></div><div class="a"></div><div class="l"></div><div class="r"><span class="t"></span><span class="e"></span></div>`);

/* ---------- annotation & watermark ---------- */
def('x-annot',`
:host{display:block;position:absolute;left:0;top:0;width:1920px;height:1007px;pointer-events:none;overflow:hidden}
.txt{position:absolute;left:508px;top:509px;font:30px/46px ${CJK},sans-serif;color:#e5393f;white-space:nowrap}
svg{position:absolute;left:375px;top:535px}
.wm{position:absolute;left:1236px;top:885px;font:55px/76px ${CJK},sans-serif;color:#fff;white-space:nowrap;word-spacing:15px;text-shadow:3px 4px 0 #a6a6a6;opacity:.97}
.wm span{letter-spacing:3px}
`,`<div class="txt">想看一下产品类别与子类别的销售额情况</div>
<svg width="106" height="22" viewBox="0 0 106 22"><defs><linearGradient id="g" x1="0" x2="1"><stop offset="0" stop-color="#e81ee8"/><stop offset=".7" stop-color="#e81ee8"/><stop offset="1" stop-color="#f5a8f5"/></linearGradient></defs><path d="M2 11 18 3l-1 5 87 2.500-87 3.500 1 5z" fill="url(#g)"/></svg>
<div class="wm"><span>知乎</span> @在蜀山湖边看夕阳</div>`);
</script>
</body></html>
